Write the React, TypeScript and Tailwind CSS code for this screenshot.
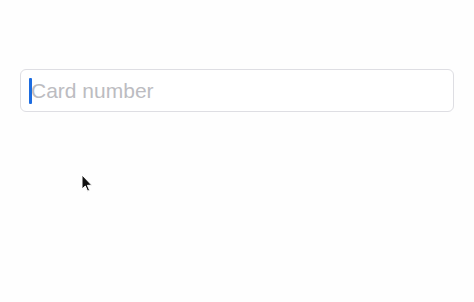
import React from 'react'

export default function App() {
  return (
    <div className="relative w-[474px] h-[302px] bg-[#fefefe] overflow-hidden" style={{ fontFamily: '"Liberation Sans", Arial, sans-serif' }}>
      <div className="pt-[69px] pl-[20px] pr-[20px]">
        <div className="flex items-center h-[43px] w-[434px] border border-[#dedee3] rounded-[6px] bg-white pl-[8px]">
          <div className="w-[3px] h-[26px] bg-[#1d6ce0] rounded-[1px] shrink-0" />
          <span className="ml-[-1px] text-[21px] leading-none text-[#bcbcc1]">Card number</span>
        </div>
      </div>

      {/* mouse pointer */}
      <svg className="absolute left-[81px] top-[174px]" width="12" height="19" viewBox="0 0 12 19">
        <path d="M1 1 L1 15 L4.3 12 L6.6 17.2 L8.6 16.3 L6.4 11.3 L10.8 11.3 Z" fill="#111" stroke="#fff" strokeWidth="1" strokeLinejoin="round" />
      </svg>
    </div>
  )
}
